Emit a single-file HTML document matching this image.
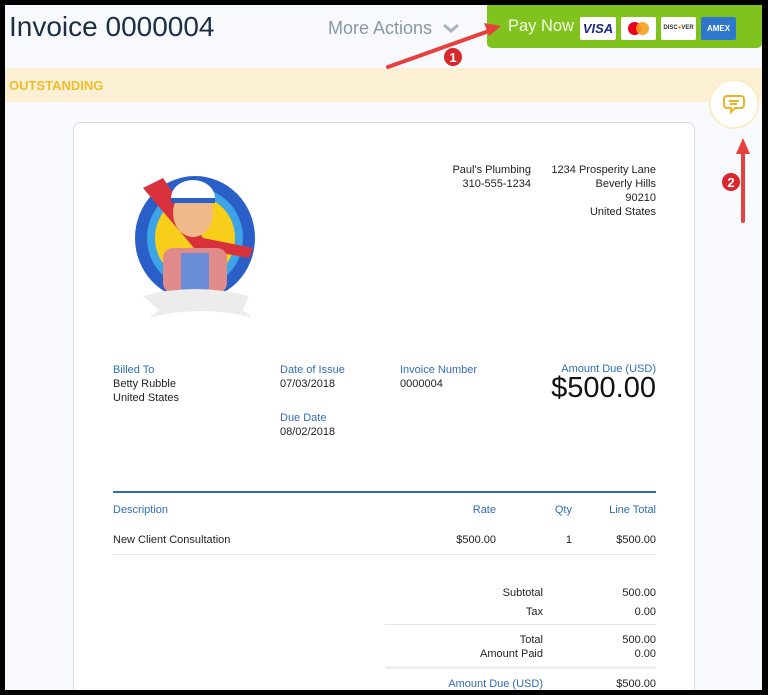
<!DOCTYPE html>
<html><head><meta charset="utf-8"><style>
*{margin:0;padding:0;box-sizing:border-box}
body{width:768px;height:695px;background:#000;position:relative;overflow:hidden;font-family:"Liberation Sans",Arial,sans-serif;font-size:11px;color:#222}
#pg{position:absolute;left:5px;top:5px;width:757px;height:685px;background:#f7f9fc;overflow:hidden}
.a{position:absolute;white-space:nowrap}
.b{color:#2f6db5}
.r{text-align:right}
</style></head><body>
<div id="pg">
<div class="a" style="left:4px;top:6px;font-size:28px;color:#1c2e44">Invoice 0000004</div>
<div class="a" style="left:323px;top:13px;font-size:18px;color:#8a97a6">More Actions</div>
<svg class="a" style="left:437px;top:17px" width="18" height="12"><path d="M2 3l7 6 7-6" stroke="#a9b3bf" stroke-width="3" fill="none"/></svg>
<div class="a" style="left:482px;top:0;width:275px;height:43px;background:#80c31f;border-radius:0 0 5px 5px"></div>
<div class="a" style="left:503px;top:12px;font-size:16.5px;color:#f2fbe6">Pay Now</div>
<div class="a" style="left:575px;top:12px;width:36px;height:23px;background:#fff;border-radius:2px;font:italic bold 13px 'Liberation Sans';color:#1a2a80;text-align:center;line-height:23px">VISA</div>
<div class="a" style="left:616px;top:12px;width:35px;height:23px;background:#fff;border-radius:2px"><span class="a" style="left:7px;top:5px;width:13px;height:13px;border-radius:50%;background:#eb001b"></span><span class="a" style="left:15px;top:5px;width:13px;height:13px;border-radius:50%;background:#f79e1b;opacity:.9"></span></div>
<div class="a" style="left:656px;top:12px;width:35px;height:23px;background:#fff;border-radius:2px;font-size:6px;font-weight:bold;color:#333;text-align:center;line-height:23px">DISC<span style="color:#f58220">●</span>VER</div>
<div class="a" style="left:696px;top:12px;width:35px;height:23px;background:#2e77cc;border-radius:2px;font-size:8px;font-weight:bold;color:#fff;text-align:center;line-height:23px">AMEX</div>
<div class="a" style="left:0;top:63px;width:757px;height:34px;background:#fbf0d3"></div>
<div class="a" style="left:4px;top:73px;font-size:13px;font-weight:bold;color:#f0bd2c">OUTSTANDING</div>
<div class="a" style="left:704px;top:74px;width:50px;height:50px;border-radius:50%;background:#fff;border:2px solid #faeec8"></div>
<svg class="a" style="left:717px;top:87px" width="24" height="24" viewBox="0 0 24 24"><path d="M5 4h14a3 3 0 0 1 3 3v6a3 3 0 0 1-3 3h-6l-4 4v-4H5a3 3 0 0 1-3-3V7a3 3 0 0 1 3-3z" fill="none" stroke="#e8b528" stroke-width="2"/><path d="M7 9h10M8 12h7" stroke="#e8b528" stroke-width="2"/></svg>
<div class="a" style="left:68px;top:117px;width:622px;height:600px;background:#fff;border:1px solid #d8dde3;border-radius:8px"></div>
<svg class="a" style="left:128px;top:163px" width="126" height="150" viewBox="0 0 126 150">
<ellipse cx="62" cy="70" rx="60" ry="62" fill="#2a5fc8"/><ellipse cx="62" cy="70" rx="48" ry="50" fill="#3ea4e8"/><ellipse cx="62" cy="70" rx="40" ry="42" fill="#f7cf1a"/>
<path d="M10 20l20-10 40 60 50 10-4 10-55-10z" fill="#d9313b"/>
<rect x="30" y="80" width="64" height="45" rx="10" fill="#e08a8a"/><rect x="48" y="85" width="28" height="40" fill="#6b8cd6"/>
<ellipse cx="60" cy="45" rx="20" ry="24" fill="#f0b98a"/><path d="M38 30a22 18 0 0 1 44 0z" fill="#fff"/><path d="M38 30h44v5H38z" fill="#2a5fc8"/>
<path d="M10 128q52-14 106 0l-6 14 10 8q-52-14-104 0l10-8z" fill="#ececec"/></svg>
<div class="a r" style="right:231px;top:158px;line-height:14px">Paul's Plumbing<br>310-555-1234</div>
<div class="a r" style="right:106px;top:158px;line-height:14px">1234 Prosperity Lane<br>Beverly Hills<br>90210<br>United States</div>
<div class="a" style="left:108px;top:358px;line-height:14px"><span class="b">Billed To</span><br>Betty Rubble<br>United States</div>
<div class="a" style="left:275px;top:358px;line-height:14px"><span class="b">Date of Issue</span><br>07/03/2018</div>
<div class="a" style="left:275px;top:406px;line-height:14px"><span class="b">Due Date</span><br>08/02/2018</div>
<div class="a" style="left:395px;top:358px;line-height:14px"><span class="b">Invoice Number</span><br>0000004</div>
<div class="a r b" style="right:106px;top:358px">Amount Due (USD)</div>
<div class="a r" style="right:106px;top:367px;font-size:29px;color:#111">$500.00</div>
<div class="a" style="left:108px;top:486px;width:543px;height:2px;background:#2f6db5"></div>
<div class="a b" style="left:108px;top:499px">Description</div>
<div class="a r b" style="right:266px;top:499px">Rate</div>
<div class="a r b" style="right:190px;top:499px">Qty</div>
<div class="a r b" style="right:106px;top:499px">Line Total</div>
<div class="a" style="left:108px;top:529px">New Client Consultation</div>
<div class="a r" style="right:266px;top:529px">$500.00</div>
<div class="a r" style="right:190px;top:529px">1</div>
<div class="a r" style="right:106px;top:529px">$500.00</div>
<div class="a" style="left:108px;top:549px;width:543px;height:1px;background:#e6e9ec"></div>
<div class="a r" style="right:219px;top:579px;line-height:19px">Subtotal<br>Tax</div>
<div class="a r" style="right:106px;top:579px;line-height:19px">500.00<br>0.00</div>
<div class="a" style="left:380px;top:619px;width:271px;height:1px;background:#e0e3e6"></div>
<div class="a r" style="right:219px;top:628px;line-height:14px">Total<br>Amount Paid</div>
<div class="a r" style="right:106px;top:628px;line-height:14px">500.00<br>0.00</div>
<div class="a" style="left:380px;top:661px;width:271px;height:3px;background:#eceef0"></div>
<div class="a r b" style="right:219px;top:673px">Amount Due (USD)</div>
<div class="a r" style="right:106px;top:673px">$500.00</div>
<svg class="a" style="left:0;top:0" width="757" height="685">
<path d="M383 62L484 26" stroke="#e8403f" stroke-width="4" stroke-linecap="round"/><path d="M496 21l-17-3 5 13z" fill="#e8403f"/>
<circle cx="448" cy="52" r="9" fill="#d9282d"/><text x="448" y="57" font-family="Liberation Sans" font-size="13" font-weight="bold" fill="#fff" text-anchor="middle">1</text>
<path d="M738 216V146" stroke="#e8403f" stroke-width="4" stroke-linecap="round"/><path d="M738 133l-7 16h14z" fill="#e8403f"/>
<circle cx="726" cy="177" r="9" fill="#d9282d"/><text x="726" y="182" font-family="Liberation Sans" font-size="13" font-weight="bold" fill="#fff" text-anchor="middle">2</text>
</svg>
</div>
</body></html>
